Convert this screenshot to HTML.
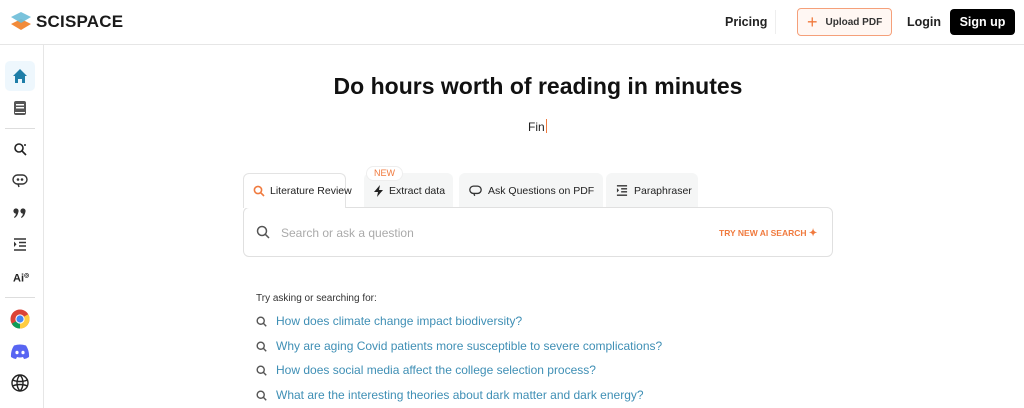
<!DOCTYPE html>
<html><head><meta charset="utf-8"><style>
*{box-sizing:border-box;margin:0;padding:0}
svg{flex-shrink:0}
body{width:1024px;height:408px;overflow:hidden;background:#fff;font-family:"Liberation Sans",sans-serif;color:#111;position:relative}
.hdr{position:absolute;left:0;top:0;width:1024px;height:45px;border-bottom:1px solid #e6e6e6}
.side{position:absolute;left:0;top:45px;width:44px;height:363px;border-right:1px solid #e6e6e6}
.ab{position:absolute;white-space:nowrap}
.tab{position:absolute;top:173px;height:35px;background:#f5f6f6;border-radius:6px 6px 0 0;font-size:10.5px;color:#222;display:flex;align-items:center;padding-left:10px;gap:6px;white-space:nowrap}
.q{position:absolute;left:256px;font-size:12px;color:#3f8fb5;display:flex;align-items:center;gap:9px;white-space:nowrap}
</style></head><body>
<div class="hdr"></div>
<svg class="ab" style="left:10px;top:10px" width="22" height="22" viewBox="0 0 22 22"><path d="M11 9 L21 14 L11 20 L1 14Z" fill="#f28b3a"/><path d="M11 2 L21 7 L11 13 L1 7Z" fill="#6cbcd8" opacity=".9"/></svg>
<div class="ab" style="left:36px;top:12px;font-size:17px;font-weight:bold;letter-spacing:.2px;color:#1a1a1a">SCISPACE</div>
<div class="ab" style="left:725px;top:15px;font-size:12.5px;font-weight:bold;color:#222">Pricing</div>
<div class="ab" style="left:775px;top:10px;width:1px;height:24px;background:#eee"></div>
<div class="ab" style="left:797px;top:8px;width:95px;height:28px;border:1px solid #f5a07a;border-radius:4px;background:#fff7f3;font-size:10px;font-weight:bold;color:#333;display:flex;align-items:center;padding-left:9px;gap:8px"><span style="color:#f07a3e;font-size:18px;font-weight:normal;line-height:1">+</span>Upload PDF</div>
<div class="ab" style="left:907px;top:15px;font-size:12.5px;font-weight:bold;color:#222">Login</div>
<div class="ab" style="left:950px;top:9px;width:65px;height:26px;background:#000;border-radius:4px;color:#fff;font-size:12.5px;font-weight:bold;display:flex;align-items:center;justify-content:center">Sign up</div>
<div class="side"></div>
<div class="ab" style="left:5px;top:61px;width:30px;height:30px;background:#eef7fd;border-radius:5px"></div>
<svg class="ab" style="left:12px;top:68px" width="16" height="16" viewBox="0 0 16 16"><path d="M8 1 L15 8 H13 V15 H10 V11 H6 V15 H3 V8 H1Z" fill="#1f7ea8"/></svg>
<svg class="ab" style="left:14px;top:101px" width="12" height="14"><rect x="0" y="0" width="12" height="14" rx="2" fill="#555"/><rect x="2" y="3" width="8" height="1.5" fill="#fff"/><rect x="2" y="6" width="8" height="1.5" fill="#fff"/><rect x="1" y="11" width="10" height="1" fill="#fff"/></svg>
<div class="ab" style="left:5px;top:128px;width:30px;height:1px;background:#ddd"></div>
<svg class="ab" style="left:13px;top:142px" width="15" height="15" viewBox="0 0 15 15" fill="none" stroke="#222" stroke-width="1.6"><circle cx="6" cy="6" r="4"/><path d="M9 9 L13 13"/><path d="M12 2v2M11 3h2" stroke-width="1"/></svg>
<svg class="ab" style="left:12px;top:174px" width="16" height="14" viewBox="0 0 16 14" fill="none" stroke="#333" stroke-width="1.4"><rect x="1" y="1" width="14" height="9" rx="4.5"/><path d="M6 10 L7 13"/><circle cx="6" cy="5.5" r=".6" fill="#333"/><circle cx="10" cy="5.5" r=".6" fill="#333"/></svg>
<svg class="ab" style="left:13px;top:208px" width="14" height="10" viewBox="0 0 14 10" fill="#333"><circle cx="3" cy="3" r="2.6"/><path d="M5.4 3.5 Q5 8 1.5 10 L1 9 Q3 7.5 3 5Z"/><circle cx="10" cy="3" r="2.6"/><path d="M12.4 3.5 Q12 8 8.5 10 L8 9 Q10 7.5 10 5Z"/></svg>
<svg class="ab" style="left:13px;top:238px" width="14" height="13" viewBox="0 0 14 13" stroke="#333" stroke-width="1.4"><path d="M1 1H13M6 4.5H13M6 8H13M1 12H13"/><path d="M1 3.5L3.5 6.2L1 9Z" fill="#333" stroke="none"/></svg>
<div class="ab" style="left:13px;top:272px;font-size:11px;font-weight:bold;color:#222">Ai<sup style="font-size:6px">◎</sup></div>
<div class="ab" style="left:5px;top:297px;width:30px;height:1px;background:#ddd"></div>
<svg class="ab" style="left:10px;top:309px" width="20" height="20" viewBox="0 0 20 20"><circle cx="10" cy="10" r="9.5" fill="#db4437"/><path d="M10 10 L1.8 14.7 A9.5 9.5 0 0 0 10 19.5Z" fill="#0f9d58"/><path d="M10 10 L10 19.5 A9.5 9.5 0 0 0 18.2 5.2 Z" fill="#ffcd40"/><circle cx="10" cy="10" r="4.6" fill="#fff"/><circle cx="10" cy="10" r="3.6" fill="#4285f4"/></svg>
<svg class="ab" style="left:10px;top:344px" width="20" height="15" viewBox="0 0 20 15"><path d="M4 1.5 Q10 -0.5 16 1.5 Q19.5 7 19 13 Q16.5 14.8 14 15 L13 13 Q10 14 7 13 L6 15 Q3.5 14.8 1 13 Q0.5 7 4 1.5Z" fill="#5865f2"/><ellipse cx="7" cy="8.5" rx="1.6" ry="1.8" fill="#fff"/><ellipse cx="13" cy="8.5" rx="1.6" ry="1.8" fill="#fff"/></svg>
<svg class="ab" style="left:10px;top:373px" width="20" height="20" viewBox="0 0 20 20" fill="none" stroke="#222" stroke-width="1.4"><circle cx="10" cy="10" r="8"/><path d="M10 2 C6 6 6 14 10 18 M10 2 C14 6 14 14 10 18 M2.5 7 C7 9 13 9 17.5 7 M2.5 13 C7 11 13 11 17.5 13"/></svg>
<div class="ab" style="left:0;top:73px;width:1076px;text-align:center;font-size:23px;font-weight:bold;color:#111">Do hours worth of reading in minutes</div>
<div class="ab" style="left:528px;top:119px;font-size:12px;color:#222">Fin<span style="display:inline-block;width:1px;height:14px;background:#f07a3e;vertical-align:-2px;margin-left:1px"></span></div>
<div class="tab" style="left:243px;width:103px;background:#fff;border:1px solid #e3e3e3;border-bottom:none;height:35px;z-index:2;padding-left:9px;gap:5px"><svg width="12" height="12" viewBox="0 0 12 12" fill="none" stroke="#f07a3e" stroke-width="1.6"><circle cx="5" cy="5" r="3.6"/><path d="M7.7 7.7 L11 11"/></svg>Literature Review</div>
<div class="tab" style="left:364px;width:89px"><svg width="9" height="12" viewBox="0 0 9 12"><path d="M6 0 L0 7 H4 L3 12 L9 5 H5Z" fill="#222"/></svg>Extract data</div>
<div class="ab" style="left:366px;top:166px;width:37px;height:15px;background:#fff;border:1px solid #eee;border-radius:8px;font-size:9px;color:#f07a3e;text-align:center;line-height:13px;z-index:3">NEW</div>
<div class="tab" style="left:459px;width:144px"><svg width="13" height="12" viewBox="0 0 16 14" fill="none" stroke="#333" stroke-width="1.6"><rect x="1" y="1" width="14" height="9" rx="4.5"/><path d="M6 10 L7 13"/></svg>Ask Questions on PDF</div>
<div class="tab" style="left:606px;width:92px"><svg width="12" height="11" viewBox="0 0 14 13" stroke="#333" stroke-width="1.6"><path d="M1 1H13M6 4.5H13M6 8H13M1 12H13"/><path d="M1 3.5L3.5 6.2L1 9Z" fill="#333" stroke="none"/></svg>Paraphraser</div>
<div class="ab" style="left:243px;top:207px;width:590px;height:50px;border:1px solid #e0e0e0;border-radius:6px;background:#fff"></div>
<svg class="ab" style="left:256px;top:225px" width="14" height="14" viewBox="0 0 14 14" fill="none" stroke="#555" stroke-width="1.5"><circle cx="6" cy="6" r="4.5"/><path d="M9.3 9.3 L13 13"/></svg>
<div class="ab" style="left:281px;top:226px;font-size:12px;color:#aaa">Search or ask a question</div>
<div class="ab" style="left:719px;top:228px;font-size:8.5px;font-weight:bold;color:#f07a3e">TRY NEW AI SEARCH <span style="font-size:10px">✦</span></div>
<div class="ab" style="left:256px;top:293px;font-size:10px;color:#333">Try asking or searching for:</div>
<div class="q" style="top:314px"><svg width="11" height="11" viewBox="0 0 14 14" fill="none" stroke="#555" stroke-width="1.8"><circle cx="6" cy="6" r="4.5"/><path d="M9.3 9.3 L13 13"/></svg>How does climate change impact biodiversity?</div>
<div class="q" style="top:339px"><svg width="11" height="11" viewBox="0 0 14 14" fill="none" stroke="#555" stroke-width="1.8"><circle cx="6" cy="6" r="4.5"/><path d="M9.3 9.3 L13 13"/></svg>Why are aging Covid patients more susceptible to severe complications?</div>
<div class="q" style="top:363px"><svg width="11" height="11" viewBox="0 0 14 14" fill="none" stroke="#555" stroke-width="1.8"><circle cx="6" cy="6" r="4.5"/><path d="M9.3 9.3 L13 13"/></svg>How does social media affect the college selection process?</div>
<div class="q" style="top:388px"><svg width="11" height="11" viewBox="0 0 14 14" fill="none" stroke="#555" stroke-width="1.8"><circle cx="6" cy="6" r="4.5"/><path d="M9.3 9.3 L13 13"/></svg>What are the interesting theories about dark matter and dark energy?</div>
</body></html>
